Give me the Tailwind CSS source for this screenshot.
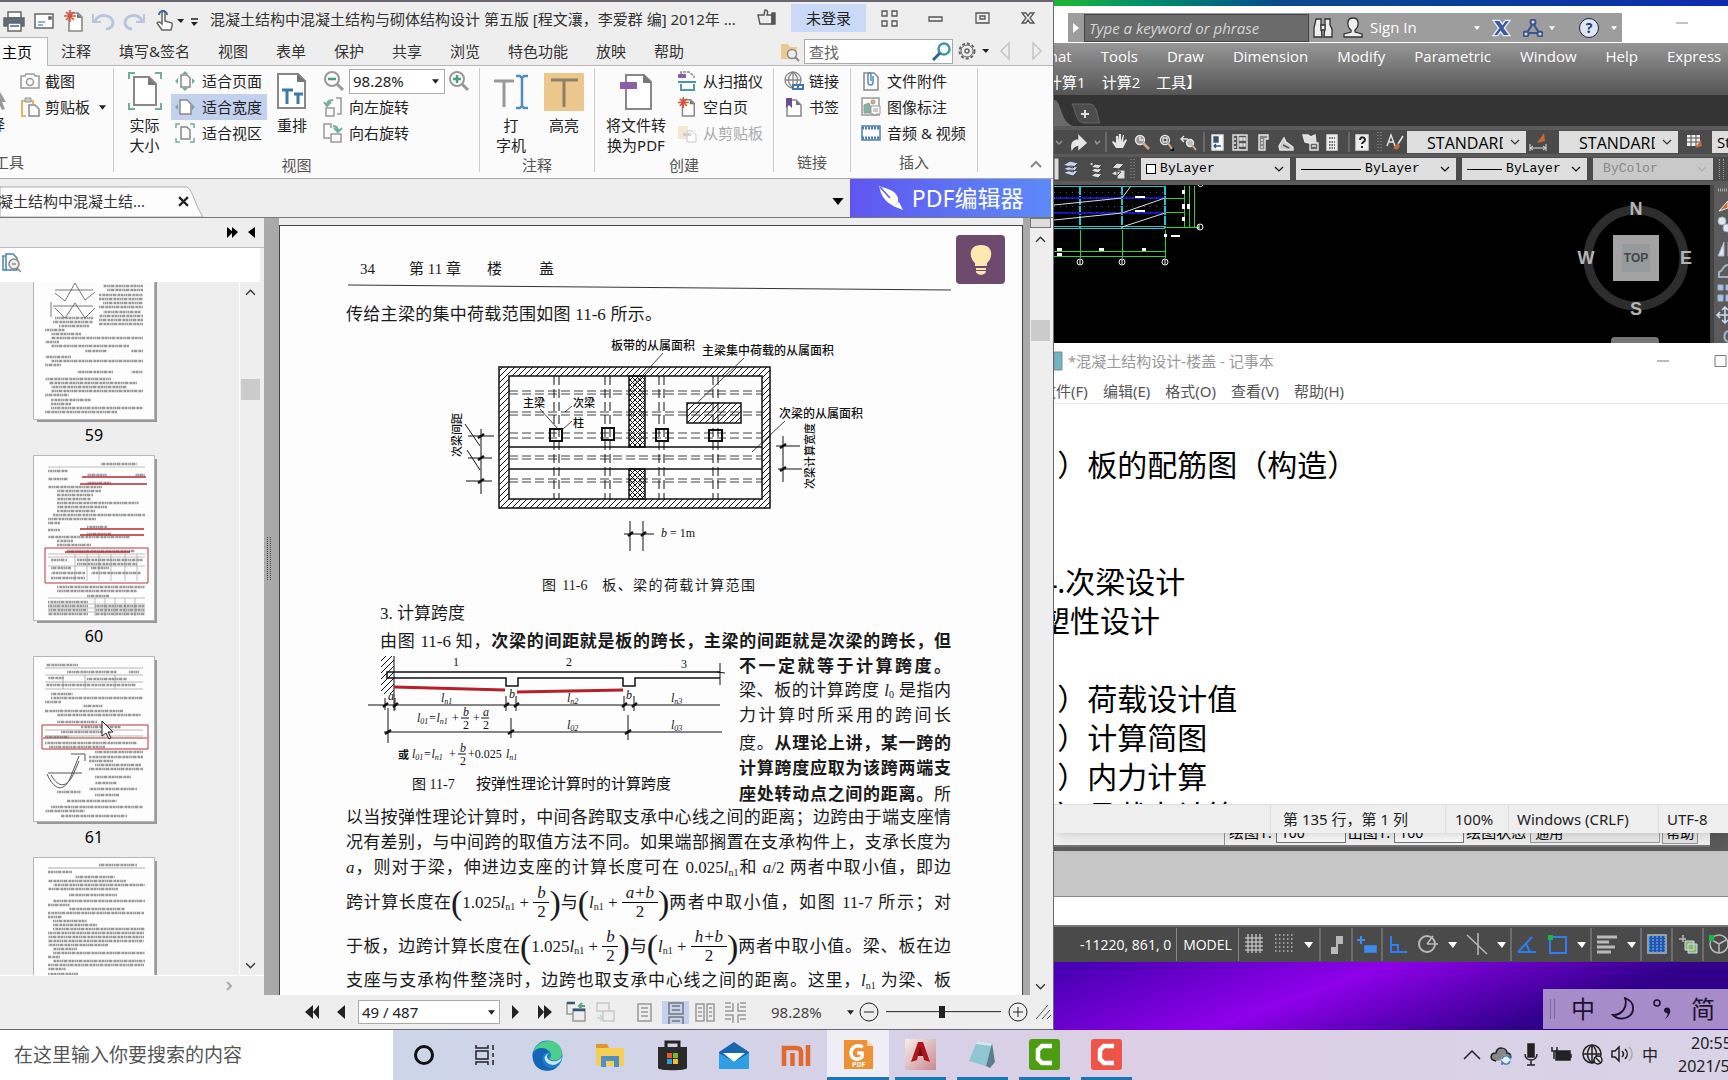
<!DOCTYPE html>
<html lang="zh-CN">
<head>
    <meta charset="UTF-8">
    <meta name="viewport" content="width=device-width, initial-scale=1.0">
    <title>Desktop</title>
    <script src="https://cdn.jsdelivr.net/npm/@tailwindcss/browser@4"></script>
</head>
<body class="h-screen overflow-hidden font-['Noto_Sans','Noto_Sans_CJK_SC',sans-serif] text-[15px] text-[#222]">
<!-- Shared icon shapes -->
<svg class="absolute size-0">
    <symbol id="drop" viewBox="0 0 8 5"><path d="M0 0h8L4 5z" fill="currentColor"/></symbol>
    <symbol id="chev" viewBox="0 0 10 6"><path d="M1 1l4 4 4-4" fill="none" stroke="currentColor" stroke-width="1.2"/></symbol>
    <symbol id="newpage" viewBox="0 0 20 22"><path d="M5 3h9l4 4v14H5z" fill="#fff" stroke="#888" stroke-width="1.6"/><path d="M13 3l5 5h-5z" fill="#777"/><path d="M6 0v12M0 6h12M2 2l8 8M10 2l-8 8" stroke="#d9523c" stroke-width="1.6"/></symbol>
    <pattern id="hatch" width="6" height="6" patternUnits="userSpaceOnUse"><path d="M0 6L6 0M-1 1l2-2M5 7l2-2" stroke="#111" stroke-width="1"/></pattern>
    <pattern id="cross" width="5" height="5" patternUnits="userSpaceOnUse"><path d="M0 5L5 0M0 0l5 5" stroke="#111" stroke-width="1"/></pattern>
</svg>

<div class="relative flex h-full flex-col">
    <!-- Desktop -->
    <main class="relative min-h-0 flex-1 overflow-hidden bg-[#3a0090]">
        <div class="absolute inset-x-0 top-0 h-[6px] bg-linear-to-r from-[#1db13a] from-62% via-[#0d4a8c] via-74% to-[#1028b0]"></div>
        <div class="absolute right-0 bottom-0 left-[61%] h-[70px] bg-linear-[160deg] from-[#4a00b4] from-5% via-[#8e00ea] via-40% to-[#30008a] to-75%"></div>

        <!-- CAD window -->
        <section class="absolute top-[6px] right-0 bottom-[68px] left-[61%] flex flex-col overflow-hidden bg-[#5b5b5b] text-white">
            <header class="flex h-[37px] shrink-0 items-end bg-white pb-px pl-[14px]">
                <div class="flex h-[29px] w-[554px] items-center bg-[#9d9d9d] text-[16px]">
                    <svg class="mx-[5px] h-[10px] w-[6px]" viewBox="0 0 6 10"><path d="M0 0l6 5-6 5z" fill="#fff"/></svg>
                    <input aria-label="Search" placeholder="Type a keyword or phrase" class="h-[28px] w-[225px] border border-[#444] bg-[#6b6b6b] pl-1 font-['Open_Sans'] text-[15px] italic placeholder:text-[#d5d5d5]">
                    <svg class="ml-1 h-[22px] w-5" viewBox="0 0 20 22" fill="#eee" stroke="#333" stroke-width="1.3"><path d="M3 2h5v6l1 12H1V11zM12 2h5l0 6 2 4v8h-8l1-12z"/><path d="M8 8h4v5H8z"/></svg>
                    <svg class="ml-[10px] h-[22px] w-5" viewBox="0 0 20 22" fill="#eee" stroke="#333" stroke-width="1.3"><path d="M10 1c7 0 6 9 2 12v2l7 2v3H1v-3l7-2v-2C4 10 3 1 10 1z"/></svg>
                    <button class="ml-[7px] w-[104px] text-left font-['Open_Sans'] text-[15px]">Sign In</button>
                    <svg class="h-[4px] w-[6px]"><use href="#drop"/></svg>
                    <svg class="ml-3 h-[18px] w-[19px]" viewBox="0 0 20 18"><path d="M1 1h7l3 4 3-4h5l-6 8 6 8h-7l-3-4-3 4H1l6-8z" fill="#3a5c9f" stroke="#e6e9f2" stroke-width="1.500"/></svg>
                    <svg class="ml-3 h-[18px] w-5" viewBox="0 0 20 18" fill="none" stroke="#3b558b" stroke-width="2"><path d="M10 4l6 10H4z"/><circle cx="10" cy="3" r="2.500" fill="#dde"/><circle cx="3" cy="15" r="2.500" fill="#dde"/><circle cx="17" cy="15" r="2.500" fill="#dde"/></svg>
                    <svg class="ml-[6px] h-[4px] w-[6px]"><use href="#drop"/></svg>
                    <button class="ml-6 size-5 rounded-full border border-[#224] bg-[#dfe5f2] text-[14px] leading-4 font-bold text-[#23407a]">?</button>
                    <svg class="ml-3 h-[4px] w-[6px]"><use href="#drop"/></svg>
                </div>
                <svg class="mb-3 ml-[54px] h-[8px] w-3" viewBox="0 0 12 8"><path d="M0 1h12" stroke="#888"/></svg>
            </header>
            <div class="h-[52px] shrink-0 overflow-hidden bg-linear-to-b from-[#979797] to-[#555] font-['Open_Sans','Noto_Sans_CJK_SC'] text-[15px] whitespace-nowrap">
                <nav class="-ml-[10px] flex h-[27px] items-center gap-[29px]">
                    <span>mat</span><span>Tools</span><span>Draw</span><span>Dimension</span><span>Modify</span><span>Parametric</span><span>Window</span><span>Help</span><span>Express</span>
                </nav>
                <nav class="-ml-[7px] flex h-[24px] items-center gap-[16px]"><span>计算1</span><span>计算2</span><span>工具】</span></nav>
            </div>
            <div class="flex h-[31px] shrink-0 items-end bg-[#343434]">
                <svg class="h-[26px] w-[48px]" viewBox="0 0 48 26"><path d="M0 0c8 0 6 24 20 26H0z" fill="#6a6a6a"/><path d="M18 4h18c8 0 8 19 10 19H30c-8 0-8-12-12-19z" fill="#4c4c4c" stroke="#666"/><path d="M31 10v8M27 14h8" stroke="#ddd" stroke-width="2"/></svg>
            </div>
            <!-- Tool row -->
            <div class="mt-1 flex h-[24px] shrink-0 items-center bg-[#4b4b4b]">
                <svg class="h-6 w-[353px] shrink-0" viewBox="1055 130 353 24" fill="none" stroke="#e6e6e6" stroke-width="1.4">
                    <path d="M1057 141l3 3 3-3M1096 141l2 3 3-3" stroke="#999"/>
                    <path d="M1073 149c-1-7 2-9 7-9v-4l7 7-7 6v-4c-3 0-5 1-7 4z" fill="#e6e6e6"/>
                    <path d="M1107 132v20M1205 132v20M1350 132v20" stroke="#777"/>
                    <path d="M1117 148l-4-6 1-1 3 2v-7h2v5l1-7h2v7l2-6h1l-1 7 3-3 1 1-4 8z" fill="#e6e6e6" stroke="none"/>
                    <circle cx="1141" cy="140" r="4.500" fill="#999"/><path d="M1144 143l6 6" stroke="#d7a98a" stroke-width="2.500"/><path d="M1141 137v3h3"/>
                    <circle cx="1166" cy="140" r="4.500"/><path d="M1164 138h4v4h-4z"/><path d="M1169 143l4 6" stroke="#d7a98a" stroke-width="2"/><path d="M1171 151h4v-4z" fill="#111" stroke="none"/>
                    <path d="M1189 139h-6m2-3l-3 3 3 3"/><circle cx="1191" cy="143" r="3.500" fill="#bbb"/><path d="M1193 145l4 5" stroke="#d7a98a" stroke-width="2"/>
                    <path d="M1213 135h11v15h-11z" fill="#fff"/><path d="M1215 137h4v5h-4z" fill="#357" stroke="#357"/><path d="M1215 146h7M1217 144l-2 2 2 2" stroke="#357"/>
                    <path d="M1234 135h14v15h-14z" fill="#555"/><path d="M1239 135v15M1235 139h2M1235 143h2M1235 147h2M1241 138h2v2h-2zM1245 138h1v2h-1zM1241 144h2v2h-2zM1245 144h1v2h-1z"/>
                    <path d="M1260 135h9v4h-3v11h-6z" fill="#888"/><path d="M1262 140h2M1262 143h2M1262 147h2"/>
                    <path d="M1280 146l5-8 2 4 7 5v3h-13z" fill="#ccc"/><path d="M1284 145l6 3" stroke="#555"/>
                    <path d="M1304 135h5l3 2 4-2 1 8h-7l-4-1z" fill="#ddd"/><path d="M1311 143h8v7h-8zM1313 146h4" fill="#666"/>
                    <path d="M1328 135h10v15h-10z" fill="#eee"/><path d="M1330 138h6M1330 142h6M1330 145h6M1330 148h6" stroke="#444" stroke-dasharray="1.500 1"/>
                    <path d="M1357 135h12v15h-12z" fill="#eee"/><path d="M1361 140c0-4 5-3 5 0 0 2-3 2-3 4M1363 146v2" stroke="#222" stroke-width="2"/>
                    <path d="M1379 132v20M1382 132v20" stroke="#888" stroke-dasharray="1 2"/>
                    <path d="M1388 146l4-11 4 11M1390 142h5"/><path d="M1404 136l-5 8" stroke-width="1.500"/><path d="M1394 148l5-5 2 3-3 4z" fill="#c8693a" stroke="none"/>
                </svg>
                <select aria-label="Text style" class="h-[22px] w-[119px] shrink-0 appearance-none bg-[#dedede] pr-[23px] pl-5 font-['Open_Sans'] text-[16px] text-black"><option>STANDARD</option></select>
                <svg class="-ml-4 h-[6px] w-[10px] shrink-0 text-[#333]"><use href="#chev"/></svg>
                <svg class="mx-[9px] h-[20px] w-[18px] shrink-0" viewBox="0 0 18 20" fill="none" stroke="#ddd"><path d="M1 12v7M17 12v7M1 16h16M4 14l-3 2 3 2M14 14l3 2-3 2"/><path d="M8 11l7-10 1 8z" fill="#c8693a" stroke="none"/></svg>
                <select aria-label="Dimension style" class="ml-[3px] h-[22px] w-[119px] shrink-0 appearance-none bg-[#dedede] pr-[23px] pl-5 font-['Open_Sans'] text-[16px] text-black"><option>STANDARD</option></select>
                <svg class="-ml-4 h-[6px] w-[10px] shrink-0 text-[#333]"><use href="#chev"/></svg>
                <svg class="mx-[8px] ml-[14px] h-[18px] w-[18px] shrink-0" viewBox="0 0 18 18"><path d="M1 2h13v11H1z" fill="#eee"/><path d="M1 5h13M1 9h13M5 2v11M10 2v11" stroke="#555"/><path d="M9 15l6-8 1 6z" fill="#c8693a"/></svg>
                <select aria-label="Table style" class="h-[22px] w-[119px] shrink-0 appearance-none bg-[#dedede] pl-[5px] font-['Open_Sans'] text-[15px] text-black"><option>Standard</option></select>
            </div>
            <!-- Layer properties -->
            <div class="mt-[3px] flex h-[24px] shrink-0 items-center gap-[6px] bg-[#4b4b4b] font-['Liberation_Mono'] text-[13px] text-black">
                <svg class="h-6 w-[81px] shrink-0" viewBox="1055 157 81 24" fill="#ddd" stroke="#444"><path d="M1055 158h5v22h-5z"/><path d="M1064 173l7-3 8 1-5 5zM1064 169l7-3 8 1-5 5zM1064 165l7-4 8 2-5 5z" fill="#bcd4ec"/><path d="M1092 176l4-3 7 1-4 4zM1092 171l4-3 7 1-4 4zM1092 167l4-3 7 1-4 4z"/><path d="M1089 164l5-2v4z"/><path d="M1112 174l4-3 6 1-4 4zM1113 168l5-5 7 1-5 5zM1118 170h8v9h-8z"/><path d="M1132 159v20M1135 159v20" stroke="#999" stroke-dasharray="1 2"/></svg>
                <label class="relative flex h-[22px] w-[149px] shrink-0 items-center bg-[#dedede] pl-[5px]"><i class="mr-1 size-[10px] border border-black bg-white"></i><select aria-label="Color" class="flex-1 appearance-none"><option>ByLayer</option></select><svg class="mr-[6px] h-[6px] w-[10px]"><use href="#chev"/></svg></label>
                <label class="relative flex h-[22px] w-[160px] shrink-0 items-center bg-[#dedede] pl-[5px]"><i class="mr-1 h-px w-[60px] bg-black"></i><select aria-label="Linetype" class="flex-1 appearance-none"><option>ByLayer</option></select><svg class="mr-[6px] h-[6px] w-[10px]"><use href="#chev"/></svg></label>
                <label class="relative flex h-[22px] w-[125px] shrink-0 items-center bg-[#dedede] pl-[5px]"><i class="mr-1 h-px w-[35px] bg-black"></i><select aria-label="Lineweight" class="flex-1 appearance-none"><option>ByLayer</option></select><svg class="mr-[6px] h-[6px] w-[10px]"><use href="#chev"/></svg></label>
                <label class="relative flex h-[22px] w-[120px] shrink-0 items-center bg-[#c9c9c9] pl-[10px] text-[#888]"><select disabled aria-label="Plot style" class="flex-1 appearance-none"><option>ByColor</option></select><svg class="mr-[6px] h-[6px] w-[10px] text-[#aaa]"><use href="#chev"/></svg></label>
                <i class="h-5 w-[5px] shrink-0 border-x border-dotted border-[#999]"></i>
            </div>
            <!-- Model space -->
            <div class="mt-1 flex h-[662px] shrink-0">
                <div class="flex flex-1 flex-col bg-black">
                    <div class="flex flex-1 justify-between">
                        <svg class="h-[90px] w-[160px]" viewBox="1055 185 160 90" fill="none" shape-rendering="crispEdges">
                            <path d="M1055 186.500h111M1055 226.500h111M1055 228.500h111" stroke="#25c5cc"/>
                            <path d="M1081 186v42M1123 186v42M1166 186v42" stroke="#25c5cc" stroke-width="2" stroke-dasharray="9 1"/>
                            <path d="M1055 198h111M1055 213h111" stroke="#1212b8" stroke-width="2"/>
                            <path d="M1055 198.500h111M1055 212.500h111M1055 206.500h111M1055 192.500h111" stroke="#2a55aa" stroke-dasharray="1 5"/>
                            <path d="M1166 198.500h20M1166 212.500h20M1166 227.500h34M1185.500 186v42M1190.500 186v42M1195.500 186v42M1081.500 230v28M1123.500 230v28M1166.500 230v28M1055 251.500h111M1055 256.500h111" stroke="#2fd02f"/>
                            <path d="M1055 205l68-7 9-12M1055 220l68-7 43-15M1123 227l43-14" stroke="#ddd" shape-rendering="auto"/>
                            <path d="M1136 196h10v2h-10zM1136 210h10v2h-10zM1183 190h3v4h-3zM1183 204h3v5h-3zM1188 204h3v5h-3zM1183 217h3v4h-3zM1172 235h9v2h-9zM1165 234h3v3h-3zM1058 248h5v3h-5zM1058 253h5v3h-5zM1100 248h5v3h-5zM1143 248h4v3h-4z" fill="#fff"/>
                            <g stroke="#fff" shape-rendering="auto"><circle cx="1081" cy="262" r="3"/><circle cx="1123" cy="262" r="3"/><circle cx="1166" cy="262" r="3"/><circle cx="1201" cy="227" r="3"/><path d="M1081 260v4M1123 260v4M1166 260v4M1200 225v4M1199 185c1 2 4 2 5 0"/></g>
                        </svg>
                        <svg class="mr-4 h-[158px] w-[130px] font-['Liberation_Sans'] font-bold" viewBox="1564 185 130 158" fill="#b5b5b5" text-anchor="middle" font-size="18">
                            <circle cx="1636" cy="258" r="48" fill="none" stroke="#2d2d2d" stroke-width="9"/>
                            <text x="1636" y="215">N</text><text x="1586" y="264">W</text><text x="1686" y="264">E</text><text x="1636" y="315">S</text>
                            <path d="M1613 235h46v46h-46z" fill="#a3a3a3"/><path d="M1622 244h28v28h-28z" fill="#959a9c"/>
                            <text x="1636" y="262" font-size="12" fill="#444">TOP</text>
                            <rect x="1611" y="337" width="48" height="14" rx="4" fill="#777"/>
                        </svg>
                    </div>
                    <div class="flex h-[28px] items-end border-b-2 border-[#777] bg-[#f5f5f5] pl-[170px] text-[15px] text-black">
                        <div class="flex h-[26px] items-center gap-[2px] border-l border-[#999] pl-1 whitespace-nowrap">
                            <label class="flex items-center gap-1">绘图1:<select class="h-[22px] w-[70px] appearance-none border border-[#777] bg-white pl-1 text-[14px]"><option>100</option></select></label>
                            <label class="flex items-center gap-1">出图1:<select class="h-[22px] w-[70px] appearance-none border border-[#777] bg-white pl-1 text-[14px]"><option>100</option></select></label>
                            <label class="flex items-center gap-1">绘图状态<select class="h-[22px] w-[130px] appearance-none border border-[#999] bg-[#eee] pl-1 text-[14px]"><option>通用</option></select></label>
                            <button class="h-[24px] w-[36px] border border-[#999] bg-[#e8e8e8] text-[14px]">帮助</button>
                        </div>
                    </div>
                </div>
                <svg class="h-[158px] w-[18px]" viewBox="1710 185 18 158" fill="#dfe6ee" stroke="#9fb2c8"><path d="M1710 185h4v158h-4z" fill="#444" stroke="none"/><path d="M1718 190h10" stroke="#aaa" stroke-dasharray="1 1" stroke-width="3"/><path d="M1719 211l9-10v7z" fill="#c8693a" stroke="#eee"/><circle cx="1722" cy="221" r="4"/><circle cx="1727" cy="228" r="4"/><path d="M1724 242v14h-6zM1728 242v14"/><path d="M1728 265c-6 0-4 6-9 7v5h9" fill="none" stroke-width="2"/><path d="M1718 285h5v5h-5zM1726 285h5v5h-5zM1718 295h5v6h-5zM1726 295h5v6h-5z" fill="#9fc3ec"/><path d="M1717 315h12M1725 308v14M1720 312l-3 3 3 3M1722 310l3-3 3 3M1722 320l3 3 3-3" stroke="#cfe0f5" stroke-width="1.500" fill="none"/><path d="M1728 331a6 6 0 0 0 0 11" fill="none" stroke-width="2"/></svg>
            </div>
            <div class="mt-[4px] h-[46px] shrink-0 border-b border-[#888] bg-[#c6c6c6]"></div>
            <div class="h-[28px] shrink-0 bg-white"></div>
            <!-- CAD status bar -->
            <footer class="flex min-h-0 flex-1 items-center border-t-2 border-[#777] bg-[#4a4a4a] py-px pl-6 font-['Open_Sans'] text-[14px] whitespace-nowrap">
                <span class="w-[98px] pl-[2px]">-11220, 861, 0</span>
                <button class="flex h-full w-[63px] items-center justify-center border-x border-[#888]">MODEL</button>
                <svg class="h-[33px] w-[489px] shrink-0" viewBox="1240 926 489 33" fill="none" stroke="#b9b9b9" stroke-width="1.500">
                    <path d="M1321 926v33M1353 926v33M1383 926v33M1512 926v33M1592 926v33M1642 926v33M1673 926v33M1704 926v33" stroke="#7a7a7a"/>
                    <path d="M1249 932v19M1253 932v19M1257 932v19M1261 932v19M1246 936h18M1246 940h18M1246 944h18M1246 948h18"/>
                    <path d="M1276 933h18M1276 937h18M1276 941h18M1276 945h18M1276 949h18" stroke-dasharray="1.500 2.500"/>
                    <path d="M1305 940h9l-4 6zM1449 940h9l-4 6zM1498 940h9l-4 6zM1578 940h9l-4 6zM1628 940h9l-4 6z" fill="#fff" stroke="none"/>
                    <path d="M1338 948v-13h5v6h-5M1333 946h5v5h-5z" stroke-width="2" fill="#b9b9b9"/>
                    <path d="M1362 934v8M1358 938h8" stroke="#3c8cf0" stroke-width="2"/><path d="M1366 944h11v6h-11z" stroke="#3c8cf0" fill="#3c8cf0"/>
                    <path d="M1392 934v16h16M1392 943h7v7" stroke="#2f7df0" stroke-width="2"/>
                    <circle cx="1428" cy="942" r="8" stroke-width="2"/><path d="M1428 942h11M1428 942l6-8"/>
                    <path d="M1468 933l20 19M1479 931v22"/>
                    <path d="M1519 950h18M1519 950l14-15M1527 942l4 8" stroke="#2f7df0" stroke-width="2"/>
                    <path d="M1551 935h16v16h-16z" stroke="#2f7df0" stroke-width="2"/><path d="M1549 933h5v5h-5z" fill="#1b4" stroke="none"/>
                    <path d="M1598 935h20M1598 940h12M1598 945h18M1598 950h14" stroke-width="3"/>
                    <path d="M1649 933h18v18h-18z" fill="#2456a8"/><path d="M1649 935h18M1649 938h18M1649 941h18M1649 944h18M1649 947h18M1649 950h18" stroke="#5a9cf5" stroke-dasharray="2 2"/>
                    <path d="M1684 933v7M1680 937h7"/><path d="M1686 939h9v9h-9zM1689 942h9v9h-9z" fill="#8db86b" stroke="#cde" stroke-width="1"/>
                    <circle cx="1720" cy="942" r="9"/><path d="M1720 942v9M1720 942l-7-4M1720 942l7-4"/><path d="M1710 933h5v6h-5z" fill="#1b4" stroke="none"/>
                </svg>
            </footer>
        </section>

        <!-- Notepad window -->
        <section class="absolute top-[343px] right-0 left-[61%] flex h-[490px] flex-col overflow-hidden bg-white whitespace-nowrap shadow-lg">
            <header class="flex h-[36px] shrink-0 items-center text-[#999]">
                <svg class="h-[20px] w-[10px]" viewBox="0 0 10 20"><path d="M0 1h8v18H0z" fill="#6fb7c4" stroke="#888"/></svg>
                <h2 class="ml-1 flex-1">*混凝土结构设计-楼盖 - 记事本</h2>
                <svg class="h-3 w-3" viewBox="0 0 12 12"><path d="M0 6h12" stroke="#777"/></svg>
                <svg class="ml-[45px] h-3 w-[14px]" viewBox="0 0 14 12"><path d="M1 .5h11v11H1z" fill="none" stroke="#777"/></svg>
            </header>
            <nav class="-ml-[13px] flex h-[25px] shrink-0 items-center gap-[15px] border-b border-[#e8e8e8] text-[#555]">
                <span>文件(F)</span><span>编辑(E)</span><span>格式(O)</span><span>查看(V)</span><span>帮助(H)</span>
            </nav>
            <textarea aria-label="Document" class="mt-[2px] -ml-[14px] min-h-0 flex-1 resize-none overflow-hidden text-[30px] leading-[39px] text-black">

&#8199;）板的配筋图（构造）


4.次梁设计
塑性设计

&#8199;）荷载设计值
&#8199;）计算简图
&#8199;）内力计算
&#8199;）承载力计算</textarea>
            <footer class="flex h-[29px] shrink-0 items-stretch border-t border-[#ddd] bg-[#efefef] leading-[28px]">
                <span class="flex-1"></span>
                <span class="w-[175px] border-l border-[#ddd] pl-3">第 135 行，第 1 列</span>
                <span class="w-[63px] border-l border-[#ddd] pl-[9px]">100%</span>
                <span class="w-[150px] border-l border-[#ddd] pl-2">Windows (CRLF)</span>
                <span class="w-[70px] border-l border-[#ddd] pl-2">UTF-8</span>
            </footer>
        </section>

        <!-- PDF reader window -->
        <section class="absolute inset-y-0 left-0 flex w-[61%] flex-col overflow-hidden border-t-2 border-r border-b border-[#6b6670] bg-[#eee] whitespace-nowrap">
            <header class="flex h-[35px] shrink-0 items-center">
                <svg class="h-7 w-[206px] shrink-0" viewBox="0 6 206 28" fill="none" stroke="#666" stroke-width="1.500">
                    <path d="M8 12h13v6H8z" fill="#fff"/><path d="M4 18h20v8H4z" fill="#5b6f82"/><path d="M8 23h13v8H8z" fill="#fff"/><path d="M10 26h9" stroke="#468"/>
                    <path d="M35 14h18v14H35z" fill="#fff"/><path d="M38 22h7M38 25h5" stroke="#79a"/><path d="M49 17h2v2h-2z" fill="#459"/>
                    <path d="M95 21c4-9 18-6 18 2 0 4-4 6-7 6" stroke="#b7c6dd" stroke-width="3"/><path d="M93 14v8h8" stroke="#b7c6dd" stroke-width="2"/>
                    <path d="M142 21c-4-9-17-6-17 2 0 4 4 6 7 6" stroke="#b7c6dd" stroke-width="3"/><path d="M144 14v8h-8" stroke="#b7c6dd" stroke-width="2"/>
                    <path d="M162 24V13c0-2 3-2 3 0v8l7 2c1 3-1 5-1 7h-9l-5-7c1-2 3-1 5 1z" fill="#fff"/><path d="M159 15a4 4 0 1 1 8 0" stroke="#3f6795" stroke-width="2"/>
                    <path d="M177 19h7l-3 4zM191 22h7l-4 4z" fill="#222" stroke="none"/><path d="M191 19h7" stroke="#222"/>
                    <svg x="64" y="10" width="20" height="22" stroke="none"><use href="#newpage"/></svg>
                </svg>
                <h1 class="ml-1 min-w-0 flex-1 overflow-hidden text-clip text-[15px] text-[#333]">混凝土结构中混凝土结构与砌体结构设计 第五版 [程文瀼，李爱群 编] 2012年 ...</h1>
                <svg class="mb-1 h-5 w-5 shrink-0" viewBox="0 0 20 20" fill="none" stroke="#555" stroke-width="1.400"><path d="M1 7h6l1-5c3 0 3 2 2 5h5v9H3z"/><path d="M15 5h3v11h-3z" fill="#555"/></svg>
                <button class="mx-[14px] mb-[3px] h-[28px] w-[75px] shrink-0 bg-[#cad9f5]">未登录</button>
                <svg class="mb-1 h-5 w-[173px] shrink-0" viewBox="880 6 173 20" fill="none" stroke="#555" stroke-width="1.300"><path d="M882 9h5v5h-5zM892 9h5v5h-5zM882 19h5v5h-5zM892 19h5v5h-5zM929 15h13v4h-13zM976 11h13v10h-13zM980 14h5v3h-5z"/><path d="M1022 11h4l2 3 2-3h4l-4 5 4 5h-4l-2-3-2 3h-4l4-5z"/></svg>
            </header>
            <nav class="flex h-[29px] shrink-0 items-end border-b border-[#b5b5b5] text-[15px] leading-[28px] text-[#333]">
                <a href="#" class="-mb-px h-[29px] w-[48px] border-t border-r border-[#b5b5b5] bg-[#fbfbfb] pl-[2px] text-black">主页</a>
                <div class="flex flex-1 gap-7 pl-[13px]"><a href="#">注释</a><a href="#">填写&amp;签名</a><a href="#">视图</a><a href="#">表单</a><a href="#">保护</a><a href="#">共享</a><a href="#">浏览</a><a href="#">特色功能</a><a href="#">放映</a><a href="#">帮助</a></div>
                <svg class="mb-[3px] h-5 w-[20px]" viewBox="0 0 20 20"><path d="M1 2h7l2 3h7v12H1z" fill="#edc98d"/><circle cx="12" cy="12" r="4.500" fill="#eee" stroke="#888" stroke-width="1.500"/><path d="M15 15l4 4" stroke="#888" stroke-width="2"/></svg>
                <div class="mb-px ml-1 flex h-[25px] w-[149px] items-center border border-[#aaa] bg-white">
                    <input aria-label="查找" placeholder="查找" class="min-w-0 flex-1 pl-1 placeholder:text-[#666]">
                    <svg class="h-5 w-5" viewBox="0 0 20 20" fill="none"><circle cx="12" cy="7" r="5.500" stroke="#3f9aa5" stroke-width="2.500"/><path d="M8 11l-7 7" stroke="#345f9c" stroke-width="3"/></svg>
                </div>
                <svg class="h-[27px] w-[100px]" viewBox="953 38 100 27" fill="none" stroke="#666" stroke-width="1.500"><circle cx="967" cy="51" r="7.500" stroke-dasharray="3 2" stroke-width="2"/><circle cx="967" cy="51" r="6" stroke-width="1"/><circle cx="967" cy="51" r="2"/><path d="M982 49h7l-3 4z" fill="#222" stroke="none"/><path d="M1009 43v16l-8-8zM1033 43v16l8-8z" stroke="#c5c5c5"/></svg>
            </nav>
            <!-- Ribbon -->
            <div class="flex h-[113px] shrink-0 border-b border-[#aaa] bg-[#fbfbfb] pt-[2px] pb-[6px] leading-[20px]">
                <div class="flex w-[114px] flex-col border-r border-[#ccc]">
                    <div class="flex flex-1">
                        <div class="flex w-[20px] flex-col overflow-hidden pt-[24px]"><svg class="h-[22px] w-[8px] shrink-0" viewBox="0 0 8 22"><path d="M0 0l6 10H2l3 7-3 1-2-4z" fill="#999"/></svg><span class="-ml-[10px]">择</span></div>
                        <div class="flex flex-col leading-[26px]">
                            <button class="flex items-center gap-[5px]"><svg class="h-4 w-5" viewBox="0 0 20 16" fill="none" stroke="#999" stroke-width="1.500"><path d="M1 3h4l1-2h8l1 2h4v12H1z"/><circle cx="10" cy="9" r="3.500"/></svg>截图</button>
                            <button class="flex items-center gap-[5px]"><svg class="h-5 w-5" viewBox="0 0 20 20" fill="none" stroke-width="2"><path d="M6 19H2V4h11v3" stroke="#e5b25f"/><path d="M5 1h6v4H5z" fill="#ccc" stroke="#999" stroke-width="1"/><path d="M9 8h6l4 4v7H9z" fill="#fff" stroke="#888" stroke-width="1.500"/></svg>剪贴板<svg class="ml-1 h-[5px] w-[7px]"><use href="#drop"/></svg></button>
                        </div>
                    </div>
                    <p class="-ml-[6px] text-[#555]">工具</p>
                </div>
                <div class="flex w-[366px] flex-col border-r border-[#ccc]">
                    <div class="flex flex-1">
                        <button class="flex w-[57px] flex-col items-center pl-1"><svg class="mt-1 mb-[5px] h-[38px] w-[34px]" viewBox="0 0 34 38" fill="none"><path d="M1 7V1h6M27 1h6v6M1 31v6h6M33 31v6h-6" stroke="#6caf9d" stroke-width="2"/><path d="M6 5h15l7 7v21H6z" stroke="#888" stroke-width="2" fill="#fff"/><path d="M20 5l8 8h-8z" fill="#777"/></svg>实际<br>大小</button>
                        <div class="flex w-[96px] flex-col leading-[26px]">
                            <button class="flex items-center gap-[7px] pl-1"><svg class="h-5 w-5" viewBox="0 0 20 20"><path d="M6 4h6l3 3v9H6z" fill="#fff" stroke="#888" stroke-width="1.500"/><path d="M10 0l3 3H7zM10 20l3-3H7zM0 10l3-3v6zM20 10l-3-3v6z" fill="#6caf9d"/></svg>适合页面</button>
                            <button class="flex items-center gap-[7px] bg-[#c3d0ee] pl-1"><svg class="h-5 w-5" viewBox="0 0 20 20"><path d="M5 3h7l4 4v10H5z" fill="#fff" stroke="#888" stroke-width="1.500"/><path d="M0 10l3-3v6zM20 10l-3-3v6z" fill="#6caf9d"/></svg>适合宽度</button>
                            <button class="flex items-center gap-[7px] pl-1"><svg class="h-5 w-5" viewBox="0 0 20 20" fill="none"><path d="M6 4h6l3 3v9H6z" stroke="#888" stroke-width="1.500"/><path d="M1 5V1h4M15 1h4v4M1 15v4h4M19 15v4h-4" stroke="#6caf9d" stroke-width="1.500"/></svg>适合视区</button>
                        </div>
                        <button class="flex w-[50px] flex-col items-center"><svg class="mt-1 mb-[5px] h-[38px] w-[30px]" viewBox="0 0 30 38"><path d="M1 2h20l7 7v27H1z" fill="#fff" stroke="#888" stroke-width="2"/><path d="M20 1l9 9h-9z" fill="#777"/><path d="M5 18h11M10 18v14M17 22h9M21 22v10" stroke="#3f79a8" stroke-width="3"/></svg>重排</button>
                        <div class="flex flex-col pl-[6px] leading-[26px]">
                            <div class="flex h-[26px] items-center">
                                <svg class="h-5 w-[22px]" viewBox="0 0 22 20" fill="none"><circle cx="9" cy="8" r="7" stroke="#999" stroke-width="2"/><path d="M5 8h8" stroke="#4a9a85" stroke-width="2.500"/><path d="M14 13l6 6" stroke="#999" stroke-width="3"/></svg>
                                <label class="ml-1 flex h-[25px] w-[96px] items-center border border-[#aaa] bg-white pr-[5px] pl-[3px]"><select aria-label="缩放" class="min-w-0 flex-1 appearance-none"><option>98.28%</option></select><svg class="h-[5px] w-[7px]"><use href="#drop"/></svg></label>
                                <svg class="ml-[3px] h-5 w-[22px]" viewBox="0 0 22 20" fill="none"><circle cx="9" cy="8" r="7" stroke="#999" stroke-width="2"/><path d="M5 8h8M9 4v8" stroke="#4a9a85" stroke-width="2.500"/><path d="M14 13l6 6" stroke="#999" stroke-width="3"/></svg>
                            </div>
                            <button class="flex items-center gap-[6px]"><svg class="h-5 w-5" viewBox="0 0 20 20" fill="none"><path d="M3 11h8v8H3zM13 1h5v16h-4" stroke="#999" stroke-width="1.500"/><path d="M10 3c-4 0-6 2-6 5M1 5l3 4 4-4" stroke="#6caf9d" stroke-width="2"/></svg>向左旋转</button>
                            <button class="flex items-center gap-[6px]"><svg class="h-5 w-5" viewBox="0 0 20 20" fill="none"><path d="M7 15H1V1h7v4M8 11h10v8H8z" stroke="#999" stroke-width="1.500"/><path d="M10 3c4 0 5 2 5 5M11 5l4 4 4-4" stroke="#6caf9d" stroke-width="2"/></svg>向右旋转</button>
                        </div>
                    </div>
                    <p class="text-center text-[#555]">视图</p>
                </div>
                <div class="flex w-[115px] flex-col border-r border-[#ccc]">
                    <div class="flex flex-1 pl-[3px]">
                        <button class="flex w-[56px] flex-col items-center"><svg class="mt-[6px] mb-[3px] h-[38px] w-[36px]" viewBox="0 0 36 38" fill="none"><path d="M1 7h20M11 7v26" stroke="#999" stroke-width="3"/><path d="M29 3v30M23 2h4l2 2 2-2h4M23 34h4l2-2 2 2h4" stroke="#4f8fc0" stroke-width="2.500"/></svg>打<br>字机</button>
                        <button class="flex w-[50px] flex-col items-center"><svg class="mt-[5px] mb-1 h-[38px] w-10 bg-[#ebc78c]" viewBox="0 0 40 38"><path d="M7 7h27M20 7v27" stroke="#8d7f6a" stroke-width="3"/></svg>高亮</button>
                    </div>
                    <p class="text-center text-[#555]">注释</p>
                </div>
                <div class="flex w-[179px] flex-col border-r border-[#ccc]">
                    <div class="flex flex-1">
                        <button class="flex w-[82px] flex-col items-center"><svg class="mt-[5px] mb-1 h-[38px] w-[34px]" viewBox="0 0 34 38"><path d="M7 2h18l7 7v27H7z" fill="#fff" stroke="#888" stroke-width="2"/><path d="M24 1l9 9h-9z" fill="#777"/><path d="M1 9h17v7H1z" fill="#8a5fa8"/></svg>将文件转<br>换为PDF</button>
                        <div class="flex flex-col leading-[26px]">
                            <button class="flex items-center gap-[6px]"><svg class="h-5 w-5" viewBox="0 0 20 20" fill="none"><path d="M4 7V1h8l5 4v2" stroke="#888" stroke-dasharray="3 1" stroke-width="1.500"/><path d="M1 3h8v4H1z" fill="#8a5fa8"/><path d="M1 11h18" stroke="#4f8fc0" stroke-width="2"/><path d="M4 13v6h13v-6" stroke="#4f9aa5" stroke-width="2"/></svg>从扫描仪</button>
                            <button class="flex items-center gap-[6px]"><svg class="h-5 w-5"><use href="#newpage"/></svg>空白页</button>
                            <button disabled class="flex items-center gap-[6px] text-[#aaa]"><svg class="h-5 w-5 opacity-50" viewBox="0 0 20 20" fill="none"><path d="M1 3h10v13H1z" fill="#ecd9a8"/><path d="M10 8h5l4 4v7h-9z" fill="#fff" stroke="#999"/><path d="M6 10h8v3H6z" fill="#b9a"/></svg>从剪贴板</button>
                        </div>
                    </div>
                    <p class="text-center text-[#555]">创建</p>
                </div>
                <div class="flex w-[77px] flex-col border-r border-[#ccc]">
                    <div class="flex flex-1 flex-col pl-[10px] leading-[26px]">
                        <button class="flex items-center gap-[5px]"><svg class="h-5 w-5" viewBox="0 0 20 20" fill="none" stroke="#888" stroke-width="1.300"><circle cx="9" cy="9" r="8"/><path d="M1 9h16M9 1v16M9 1c-6 5-6 11 0 16M9 1c6 5 6 11 0 16"/><path d="M9 14h5v4H9zM14 14h5v4h-5z" stroke="#4077a8" stroke-width="2" fill="#fff"/></svg>链接</button>
                        <button class="flex items-center gap-[5px]"><svg class="h-5 w-5" viewBox="0 0 20 20"><path d="M3 3h9l5 5v11H3z" fill="#fff" stroke="#888" stroke-width="1.500"/><path d="M12 3l5 5h-5z" fill="#777"/><path d="M2 1h6v10l-3-3-3 3z" fill="#6f4a92"/></svg>书签</button>
                    </div>
                    <p class="text-center text-[#555]">链接</p>
                </div>
                <div class="flex w-[127px] flex-col border-r border-[#ccc]">
                    <div class="flex flex-1 flex-col pl-[10px] leading-[26px]">
                        <button class="flex items-center gap-[6px]"><svg class="h-5 w-5" viewBox="0 0 20 20" fill="none" stroke="#888" stroke-width="1.500"><path d="M3 2h10l4 4v13H3z"/><path d="M12 5v6c0 4-5 4-5 0V4c0-3 3-3 3 0v6" stroke="#4f8fc0"/></svg>文件附件</button>
                        <button class="flex items-center gap-[6px]"><svg class="h-5 w-5" viewBox="0 0 20 20" fill="none" stroke="#999"><path d="M1 1h17v17H1z" stroke-width="1.500"/><path d="M3 16V8l5-2 4 10z" fill="#7fb5a0"/><circle cx="12" cy="5" r="2" fill="#e5b25f"/><path d="M10 9h9v8h-4l-2 2v-2h-3z" fill="#fff"/><path d="M12 12h5M12 14h5"/></svg>图像标注</button>
                        <button class="flex items-center gap-[6px]"><svg class="h-4 w-5" viewBox="0 0 20 16"><path d="M1 1h18v14H1z" fill="#fff" stroke="#4f7fb0" stroke-width="1.500"/><path d="M1 3h18M1 13h18" stroke="#4f7fb0" stroke-width="3" stroke-dasharray="2 1"/></svg>音频 &amp; 视频</button>
                    </div>
                    <p class="text-center text-[#555]">插入</p>
                </div>
                <div class="flex flex-1 items-end justify-end pr-[11px] pb-1"><svg class="h-[8px] w-3" viewBox="0 0 12 8"><path d="M1 7l5-5 5 5" fill="none" stroke="#888" stroke-width="2"/></svg></div>
            </div>
            <!-- Document tabs -->
            <div class="flex h-[38px] shrink-0 items-end">
                <div class="relative flex h-[31px] w-[204px] items-center">
                    <svg class="absolute inset-0 h-full w-full" viewBox="0 0 204 31"><path d="M0 1h186c6 0 8 16 17 30H0z" fill="#fdfdfd" stroke="#aaa"/></svg>
                    <span class="relative -ml-[2px] w-[180px] text-[#333]">凝土结构中混凝土结...</span>
                    <button aria-label="关闭" class="relative"><svg class="h-[11px] w-[11px]" viewBox="0 0 10 10"><path d="M1 1l8 8M9 1l-8 8" stroke="#222" stroke-width="2"/></svg></button>
                </div>
                <span class="flex-1"></span>
                <svg class="mr-[6px] mb-3 h-[7px] w-3 text-black"><use href="#drop"/></svg>
                <button class="mr-[2px] flex h-[38px] w-[201px] items-center justify-center gap-[8px] bg-linear-to-r from-[#5f55f0] to-[#5b8af8] text-[23px] text-white"><svg class="h-[26px] w-[26px]" viewBox="0 0 26 26"><path d="M1 1l9 3c8 3 11 8 10 13l-4 4c-7-3-11-8-13-13z" fill="#fff"/><path d="M2 2l10 11" stroke="#5f55f0" stroke-width="1.500"/><path d="M15 21l6-4 4 8z" fill="#fff"/></svg>PDF编辑器</button>
            </div>

            <div class="flex min-h-0 flex-1 border-t border-[#777]">
                <!-- Page thumbnails -->
                <aside class="flex w-[264px] shrink-0 flex-col">
                    <div class="flex h-[30px] shrink-0 items-center justify-end gap-[10px] border-b border-[#bbb] pr-[9px]"><svg class="h-[11px] w-[11px]" viewBox="0 0 11 11"><path d="M0 0l6 5-6 6zM5 0l6 5-6 6z"/></svg><svg class="h-[11px] w-[7px]" viewBox="0 0 7 11"><path d="M7 0v11L0 5z"/></svg></div>
                    <div class="mr-1 flex h-[34px] shrink-0 items-center bg-white pl-[2px]"><svg class="mb-1 h-5 w-[19px]" viewBox="0 0 19 20" fill="none" stroke-width="1.500"><path d="M3 3H1v14h8M4 1h7l4 4v12H4z" stroke="#4a80b0"/><circle cx="12" cy="11" r="5" fill="#eee" stroke="#888"/><path d="M10 11h4M15 15l4 4" stroke="#888"/></svg></div>
                    <div class="flex min-h-0 flex-1">
                        <div class="relative flex w-[240px] flex-col items-start overflow-hidden border-r border-white pl-[33px]">
                            <div id="thumbs" class="-mt-[28px] flex w-[124px] flex-col pr-[2px] text-center text-[16px] leading-[27px] text-black"></div>
                            <svg class="absolute top-[438px] left-[101px] h-[20px] w-[13px]" viewBox="0 0 13 20"><path d="M1 1v15l4-3 3 6 2-1-3-6h5z" fill="#fff" stroke="#222"/></svg>
                        </div>
                        <div class="flex flex-1 flex-col items-center pt-[7px] pr-1 pb-[6px]">
                            <svg class="h-[7px] w-[11px] rotate-180 text-[#333]"><use href="#chev"/></svg>
                            <i class="mt-[83px] h-[21px] w-[19px] bg-[#cbcbcb]"></i>
                            <span class="flex-1"></span>
                            <svg class="h-[7px] w-[11px] text-[#333]"><use href="#chev"/></svg>
                        </div>
                    </div>
                    <div class="flex h-[20px] shrink-0 items-center border-t border-white pl-[226px]"><svg class="h-[10px] w-[6px]" viewBox="0 0 6 10"><path d="M1 1l4 4-4 4" fill="none" stroke="#aaa" stroke-width="2"/></svg></div>
                </aside>
                <div class="flex w-[15px] shrink-0 items-center bg-[#a9a9a9] pl-[3px]"><i class="mb-24 h-[43px] w-[4px] border-x border-dotted border-[#444]"></i></div>

                <!-- Book page -->
                <article class="relative mt-[7px] min-w-0 flex-1 overflow-hidden border border-b-0 border-[#444] bg-[#fdfdfd] pl-[66px] font-['Liberation_Serif','Noto_Sans_CJK_SC',serif] text-[17px] text-[#1a1a1a]">
                    <button aria-label="提示" class="absolute top-[9px] right-[17px] flex size-[49px] items-center justify-center rounded bg-[#6e4a6e]"><svg class="h-[32px] w-[22px]" viewBox="0 0 22 32" fill="#fbe9b0"><path d="M11 1c13 0 12 13 6 18v3H5v-3C-1 14-2 1 11 1zM6 24h10v2H6zM6 27h10c0 5-10 5-10 0z"/></svg></button>
                    <div class="w-[605px]">
                        <h3 class="flex h-[58px] pt-[31px] pl-[14px] text-[15px] leading-6"><span class="w-[49px]">34</span><span class="w-[78px]">第 11 章</span><span class="w-[52px]">楼</span><span>盖</span></h3>
                        <svg class="h-[8px] w-full" viewBox="0 0 606 8"><path d="M2 1l604 5" stroke="#333"/></svg>
                        <p class="mt-[10px] w-[316px] leading-[25px] [text-align-last:justify]">传给主梁的集中荷载范围如图 11-6 所示。</p>
                        <svg class="h-[246px] w-full" viewBox="346 327 605 246" fill="none" stroke="#111" font-size="12">
                            <path d="M499 367h271v141H499zM509 376v123h253V376z" fill="url(#hatch)" fill-rule="evenodd" stroke-width="1.500"/>
                            <path d="M509 391h253M509 394h253M509 412h253M509 415h253M509 433h253M509 438h253M509 456h253M509 459h253M509 479h253M509 482h253" stroke-dasharray="9 4" stroke-width="0.800"/>
                            <path d="M554 376v123M559 376v123M605 376v123M610 376v123M659 376v123M664 376v123M713 376v123M718 376v123" stroke-dasharray="9 4"/>
                            <path d="M509 447h253M509 469h253" stroke-width="1.500"/>
                            <path d="M629 376h16v71h-16zM629 469h16v30h-16z" fill="url(#cross)" stroke-width="1.500"/>
                            <path d="M687 403h54v20h-54z" fill="url(#hatch)" stroke-width="1.500"/>
                            <path d="M550 429h12v12h-12zM602 428h12v12h-12zM656 429h12v12h-12zM709 430h13v11h-13z" stroke-width="2"/>
                            <path d="M663 353l-30 33M744 358l-47 45M785 421l-33 31M540 409l18 20M572 406l-7 6M572 421l-10 9" stroke-width="0.800"/>
                            <path d="M481 429v65M468 436h26M468 458h24M466 481h26M465 424l15 22M467 450l13 20M783 436v46M776 446h24M778 469h24M630 521v30M643 521v30M624 534h30"/>
                            <path d="M478 438l6-4M478 460l6-4M478 483l6-4M780 448l6-4M780 471l6-4M628 536l5-4M641 536l5-4" stroke-width="2.500"/>
                            <g fill="#111" stroke="none" font-weight="500"><text x="611" y="350">板带的从属面积</text><text x="702" y="355">主梁集中荷载的从属面积</text><text x="779" y="418">次梁的从属面积</text>
                            <text x="523" y="407" font-size="11">主梁</text><text x="573" y="407" font-size="11">次梁</text><text x="573" y="427" font-size="11">柱</text>
                            <text transform="translate(461 457) rotate(-90)" font-size="11">次梁间距</text><text transform="translate(814 489) rotate(-90)" font-size="11">次梁计算宽度</text>
                            <text x="661" y="537"><tspan font-style="italic">b</tspan> = 1m</text></g>
                        </svg>
                        <p class="ml-[196px] w-[213px] text-[14px] leading-[26px] [text-align-last:justify]">图 11-6 &nbsp; 板、梁的荷载计算范围</p>
                        <p class="mt-[2px] ml-[34px] leading-[26px]">3. 计算跨度</p>
                        <p class="ml-[34px] h-[25px] leading-[25px] [text-align-last:justify]">由图 11-6 知，<b class="font-['Noto_Sans_CJK_SC']">次梁的间距就是板的跨长，主梁的间距就是次梁的跨长，但</b></p>
                        <div class="flex h-[153px] justify-between">
                            <svg class="h-[153px] w-[385px]" viewBox="346 654 385 153" fill="none" stroke="#111" font-size="12">
                                <path d="M381 658h13v38h-13z" fill="url(#hatch)" stroke="none"/>
                                <path d="M394 658v55M720 665v22M717 674l8 1"/>
                                <path d="M720 674H387v6h119v8h12v-8h105v8h12v-8h85" stroke-width="1.500"/>
                                <path d="M394 689l111 3M517 694l106-2" stroke="#b5202a" stroke-width="3"/>
                                <path d="M368 707h352M384 734h338M385 700v12M395 700v12M506 698v15M516 698v15M624 698v15M634 698v15M388 710v35M511 720v20M628 717v25"/>
                                <path d="M383 709l5-4M393 709l5-4M504 709l5-4M514 709l5-4M622 709l5-4M632 709l5-4M385 736l6-4M508 736l6-4M625 736l6-4" stroke-width="2.500"/>
                                <g fill="#111" stroke="none"><text x="453" y="668">1</text><text x="566" y="668">2</text><text x="681" y="670">3</text>
                                <g font-style="italic"><text x="388" y="702">a</text><text x="509" y="700">b</text><text x="626" y="701">b</text>
                                <text x="441" y="704">l<tspan font-size="8" dy="2">n1</tspan></text><text x="567" y="704">l<tspan font-size="8" dy="2">n2</tspan></text><text x="671" y="704">l<tspan font-size="8" dy="2">n3</tspan></text><text x="567" y="731">l<tspan font-size="8" dy="2">02</tspan></text><text x="671" y="731">l<tspan font-size="8" dy="2">03</tspan></text>
                                <text x="417" y="724">l<tspan font-size="8" dy="2">01</tspan><tspan dy="-2">=l</tspan><tspan font-size="8" dy="2">n1</tspan></text><text x="463" y="718">b</text><text x="483" y="718">a</text><text x="460" y="754">b</text>
                                <text x="412" y="760">l<tspan font-size="8" dy="2">01</tspan><tspan dy="-2">=l</tspan><tspan font-size="8" dy="2">n1</tspan></text><text x="506" y="760">l<tspan font-size="8" dy="2">n1</tspan></text></g>
                                <text x="452" y="724">+</text><text x="473" y="724">+</text><text x="463" y="731">2</text><text x="483" y="731">2</text>
                                <text x="398" y="761" font-size="11" font-weight="bold">或</text><text x="449" y="760">+</text><text x="460" y="767">2</text><text x="468" y="760">+0.025</text>
                                <text x="412" y="791" font-size="14">图 11-7</text><text x="476" y="791" font-size="15">按弹性理论计算时的计算跨度</text></g>
                                <path d="M461 720h8M481 720h8M458 756h8"/>
                            </svg>
                            <div class="flex w-[212px] flex-col justify-between leading-[25px] [text-align-last:justify] *:h-[25px]">
                                <p class="font-['Noto_Sans_CJK_SC'] font-bold">不一定就等于计算跨度。</p>
                                <p>梁、板的计算跨度 <i>l</i><sub class="text-[10px] leading-none">0</sub> 是指内</p>
                                <p>力计算时所采用的跨间长</p>
                                <p>度。<b class="font-['Noto_Sans_CJK_SC']">从理论上讲，某一跨的</b></p>
                                <p class="font-['Noto_Sans_CJK_SC'] font-bold">计算跨度应取为该跨两端支</p>
                                <p><b class="font-['Noto_Sans_CJK_SC']">座处转动点之间的距离。</b>所</p>
                            </div>
                        </div>
                        <div class="leading-[25px] [text-align-last:justify]">
                            <p>以当按弹性理论计算时，中间各跨取支承中心线之间的距离；边跨由于端支座情</p>
                            <p>况有差别，与中间跨的取值方法不同。如果端部搁置在支承构件上，支承长度为</p>
                            <p class="h-[25px]"><i>a</i>，则对于梁，伸进边支座的计算长度可在 0.025<i>l</i><sub class="text-[10px] leading-none">n1</sub>和 <i>a</i>/2 两者中取小值，即边</p>
                            <div class="flex h-11 items-center"><span class="w-[105px]">跨计算长度在</span><span class="text-[34px]">(</span><span>1.025<i>l</i><sub class="text-[10px] leading-none">n1</sub> +&nbsp;</span><span class="flex w-4 flex-col text-center leading-[18px] [text-align-last:center]"><i class="border-b border-black">b</i>2</span><span class="text-[34px]">)</span><span>与</span><span class="text-[34px]">(</span><span><i>l</i><sub class="text-[10px] leading-none">n1</sub> +&nbsp;</span><span class="flex w-[36px] flex-col text-center leading-[18px] [text-align-last:center]"><i class="border-b border-black">a+b</i>2</span><span class="text-[34px]">)</span><span class="flex-1">两者中取小值，如图 11-7 所示；对</span></div>
                            <div class="flex h-11 items-center"><span class="w-[174px]">于板，边跨计算长度在</span><span class="text-[34px]">(</span><span>1.025<i>l</i><sub class="text-[10px] leading-none">n1</sub> +&nbsp;</span><span class="flex w-4 flex-col text-center leading-[18px] [text-align-last:center]"><i class="border-b border-black">b</i>2</span><span class="text-[34px]">)</span><span>与</span><span class="text-[34px]">(</span><span><i>l</i><sub class="text-[10px] leading-none">n1</sub> +&nbsp;</span><span class="flex w-[36px] flex-col text-center leading-[18px] [text-align-last:center]"><i class="border-b border-black">h+b</i>2</span><span class="text-[34px]">)</span><span class="flex-1">两者中取小值。梁、板在边</span></div>
                            <p>支座与支承构件整浇时，边跨也取支承中心线之间的距离。这里，<i>l</i><sub class="text-[10px] leading-none">n1</sub> 为梁、板</p>
                        </div>
                    </div>
                </article>
                <div class="w-[7px] shrink-0 bg-[#a9a9a9]"></div>
                <div class="flex w-[23px] shrink-0 flex-col items-center pr-[2px] pb-[5px]">
                    <i class="h-[10px] w-full border border-[#777] bg-[#ddd]"></i>
                    <svg class="mt-2 h-[7px] w-[11px] rotate-180 text-[#333]"><use href="#chev"/></svg>
                    <i class="mt-[77px] h-[21px] w-[19px] bg-[#cbcbcb]"></i>
                    <span class="flex-1"></span>
                    <svg class="h-[7px] w-[11px] text-[#333]"><use href="#chev"/></svg>
                </div>
            </div>
            <!-- Page navigation -->
            <footer class="flex h-[34px] shrink-0 items-center pl-[305px]">
                <svg class="h-[14px] w-[53px]" viewBox="305 0 53 14"><path d="M313 0v14l-8-7zM319 0v14l-6-7zM345 0v14l-8-7z" fill="#222"/></svg>
                <label class="flex h-[24px] w-[142px] items-center border border-[#aaa] bg-white pr-1 pl-[3px]"><select aria-label="页码" class="flex-1 appearance-none"><option>49 / 487</option></select><svg class="h-[5px] w-[7px]"><use href="#drop"/></svg></label>
                <svg class="h-[28px] w-[250px] shrink-0" viewBox="499 998 250 28" fill="none" stroke="#999" stroke-width="1.500">
                    <path d="M511 1005v14l7-7zM537 1005v14l6-7zM543 1005v14l8-7z" fill="#222" stroke="none"/>
                    <path d="M574 1003h-8v11h6M572 1009h12v12h-12z"/><path d="M566 1003h8M572 1010h12" stroke="#357" stroke-width="2.500"/><path d="M584 1006h-6m3-3l-3 3 3 3" stroke="#5aa58f" stroke-width="2"/>
                    <g stroke="#c9c9c9"><path d="M596 1003h12v8h-12zM602 1011h11v10h-11z"/><path d="M596 1018h6m-3-3l3 3-3 3" stroke="#b9d9cd"/></g>
                    <path d="M637 1004h13v17h-13zM640 1008h7M640 1012h7M640 1016h7"/>
                    <path d="M661 1001h27v23h-27z" fill="#c3d0ee" stroke="none"/><path d="M668 1003h14v11h-14zM671 1006h8M671 1010h8M668 1024v-7h14v7M671 1021h8" stroke="#777"/>
                    <path d="M695 1004h8v17h-8zM706 1004h7v17h-7zM697 1008h4M697 1012h4M697 1016h4M708 1008h3M708 1012h3M708 1016h3"/>
                    <path d="M732 1003v8h-8M737 1003v8h8M732 1023v-8h-8M737 1023v-8h8M724 1003h6M739 1003h6M724 1007h6M739 1007h6M724 1019h6M739 1019h6"/>
                </svg>
                <span class="ml-[21px] w-[76px] text-[#444]">98.28%</span>
                <svg class="h-[5px] w-[7px]"><use href="#drop"/></svg>
                <button aria-label="缩小" class="ml-[5px]"><svg class="size-[20px]" viewBox="0 0 20 20" fill="none" stroke="#222"><circle cx="10" cy="10" r="9"/><path d="M5 10h10"/></svg></button>
                <input type="range" aria-label="缩放比例" value="49" class="mx-[7px] h-[14px] w-[115px] appearance-none bg-linear-to-b from-transparent from-45% via-[#222] via-45% to-transparent to-55% [&::-webkit-slider-thumb]:h-[12px] [&::-webkit-slider-thumb]:w-[6px] [&::-webkit-slider-thumb]:appearance-none [&::-webkit-slider-thumb]:bg-[#222]">
                <button aria-label="放大"><svg class="size-[20px]" viewBox="0 0 20 20" fill="none" stroke="#222"><circle cx="10" cy="10" r="9"/><path d="M5 10h10M10 5v10"/></svg></button>
                <svg class="ml-[8px] h-[14px] w-[15px]" viewBox="0 0 15 14" stroke="#555"><path d="M0 14L12 0M6 14l8-9M11 14l4-4"/></svg>
            </footer>
        </section>

        <!-- Input method bar -->
        <div class="absolute right-0 bottom-px flex h-[40px] w-[185px] items-center bg-[#a68cc9] text-[24px] text-[#1c1230]">
            <i class="mr-[16px] ml-[7px] h-5 w-[5px] border-x border-[#7d65a0]"></i>
            <span>中</span>
            <svg class="ml-4 size-[24px]" viewBox="0 0 24 24"><path d="M14 1c3 9-3 17-12 17 7 7 21 3 20-8 0-4-3-7-8-9z" fill="none" stroke="#1c1230" stroke-width="1.800"/></svg>
            <svg class="ml-[17px] h-[24px] w-[22px]" viewBox="0 0 22 24"><circle cx="5" cy="6" r="3" fill="none" stroke="#1c1230" stroke-width="1.500"/><path d="M13 11c6-3 8 6 0 11 3-4 3-5 2-6-3 0-4-3-2-5z" fill="#1c1230"/></svg>
            <span class="ml-[17px]">简</span>
        </div>
    </main>

    <!-- Taskbar -->
    <footer class="flex h-[50px] shrink-0 bg-linear-to-r from-[#cdd5e8] from-25% via-[#dccfe6] via-65% to-[#d8d3e6]">
        <input aria-label="搜索" placeholder="在这里输入你要搜索的内容" class="w-[393px] bg-white pl-[14px] text-[19px] placeholder:text-[#555]">
        <button class="flex w-[62px] items-center justify-center"><svg class="size-[22px]" viewBox="0 0 22 22"><circle cx="11" cy="11" r="8.500" fill="none" stroke="#111" stroke-width="3"/></svg></button>
        <button class="flex w-[60px] items-center justify-center"><svg class="h-[20px] w-[22px]" viewBox="0 0 22 20" fill="none" stroke="#222" stroke-width="1.500"><path d="M2 0v3h12V0M2 6h12v8H2zM2 20v-3h12v3M19 0v5M19 8v4M19 15v5"/></svg></button>
        <button class="flex w-[64px] items-center justify-center"><svg class="size-[31px]" viewBox="0 0 31 31"><circle cx="15.500" cy="15.500" r="15" fill="#1b7fd0"/><path d="M1 13C5-3 30-3 30 14c0 6-8 8-13 5 5-5 0-11-7-10-4 0-8 2-9 4z" fill="#4bcf8a"/><path d="M1 13c3-6 14-7 16 0-5-1-8 4-6 9 2 6 9 8 15 4-7 9-28 6-25-13z" fill="#1464b8"/><path d="M17 13c-3 2-3 7 3 8 4 1 8-1 10-4-1 5-4 7-8 8-9 0-13-9-5-12z" fill="#cfe0f0"/></svg></button>
        <button class="flex w-[62px] items-center justify-center"><svg class="h-[25px] w-[30px]" viewBox="0 0 30 25"><path d="M1 1h11l3 4h14v18H1z" fill="#f7ce55"/><path d="M1 1h11l2 4H1z" fill="#d99b2b"/><path d="M6 24V13h18v11h-5v-6h-8v6z" fill="#4e8fc4"/></svg></button>
        <button class="flex w-[62px] items-center justify-center"><svg class="h-[31px] w-[29px]" viewBox="0 0 29 31"><path d="M8 8V2h13v6" fill="none" stroke="#222" stroke-width="3"/><path d="M0 7h29v21c0 3-29 3-29 0z" fill="#2a2a2a"/><path d="M9 13h5v5H9z" fill="#e9562c"/><path d="M15 13h5v5h-5z" fill="#7cb82f"/><path d="M9 19h5v5H9z" fill="#2c9fe0"/><path d="M15 19h5v5h-5z" fill="#f5bc2d"/></svg></button>
        <button class="flex w-[62px] items-center justify-center"><svg class="h-[29px] w-[32px]" viewBox="0 0 32 29"><path d="M1 11L16 1l15 10v17H1z" fill="#1766ae"/><path d="M5 12h22L16 21z" fill="#fff"/><path d="M1 12l15 9 15-9v16H1z" fill="#2f9fe4"/></svg></button>
        <button class="flex w-[62px] items-center justify-center"><svg class="h-[21px] w-[30px]" viewBox="0 0 30 21" fill="none" stroke="#e2692b" stroke-width="4.500"><path d="M3 21V3h12c4 0 5 2 5 5v13M11.500 21V8M27 0v21"/></svg></button>
        <button class="flex w-[62px] flex-col items-center justify-between bg-white/60"><svg class="mt-[9px] h-[31px] w-[31px]" viewBox="0 0 31 31"><path d="M1 1h23l6 6v23H1z" fill="#ee9034"/><path d="M24 1l6 6h-6z" fill="#ffd9a8"/><path d="M20 8c-6-3-12 0-12 6s7 8 11 4v-4h-5" fill="none" stroke="#fff" stroke-width="3.500"/><text x="9" y="28" font-size="7" font-family="Open Sans" font-weight="bold" fill="#fff">PDF</text></svg><i class="h-[3px] w-full bg-[#1c75bb]"></i></button>
        <button class="flex w-[62px] flex-col items-center justify-between"><svg class="mt-[9px] h-[31px] w-[31px]" viewBox="0 0 31 31"><defs><linearGradient id="acad" x2="1" y2="1"><stop stop-color="#f6eeee"/><stop offset="1" stop-color="#c98a8c"/></linearGradient></defs><path d="M0 0h31v31H0z" fill="url(#acad)"/><path d="M13 3h5l7 20-6-2-1-4h-5l-1 4-6 2z" fill="#b0141c"/><path d="M15 7l3 10h-5z" fill="#7e0d13"/></svg><i class="h-[3px] w-[51px] bg-[#1c75bb]"></i></button>
        <button class="flex w-[62px] flex-col items-center justify-between"><svg class="mt-[9px] h-[31px] w-[30px]" viewBox="0 0 30 31"><path d="M10 2l15 2-6 23-17-5z" fill="#8ec6d2"/><path d="M25 4l3 19-5 6-4-2z" fill="#5a7f8a"/><path d="M10 2l15 2-1 3-15-2z" fill="#d7e6ea"/></svg><i class="h-[3px] w-[51px] bg-[#1c75bb]"></i></button>
        <button class="flex w-[62px] flex-col items-center justify-between"><svg class="mt-[9px] size-[31px]" viewBox="0 0 31 31"><rect width="31" height="31" rx="3" fill="#4c9e11"/><path d="M23 7H13L9 11v9l4 4h10" fill="none" stroke="#fff" stroke-width="4.500"/></svg><i class="h-[3px] w-[51px] bg-[#1c75bb]"></i></button>
        <button class="flex w-[62px] flex-col items-center justify-between"><svg class="mt-[9px] size-[31px]" viewBox="0 0 31 31"><rect width="31" height="31" rx="3" fill="#ee5548"/><path d="M23 7H13L9 11v9l4 4h10" fill="none" stroke="#fff" stroke-width="4.500"/></svg><i class="h-[3px] w-[51px] bg-[#1c75bb]"></i></button>
        <div class="ml-auto flex items-center">
            <svg class="h-[24px] w-[172px]" viewBox="1462 1043 172 24" fill="none" stroke="#222" stroke-width="1.500">
                <path d="M1464 1059l8-8 8 8"/>
                <path d="M1496 1061c-7-1-6-8 0-8 1-7 11-6 11 0 4 0 5 5 2 6" fill="#888"/><circle cx="1506" cy="1060" r="5" fill="#e8f0fa" stroke="none"/><path d="M1502 1059c1-4 6-4 8-1v-3M1510 1061c-1 4-6 4-8 1v3" stroke="#3a7dbd"/>
                <path d="M1528 1044h6v13h-6z" fill="#222"/><path d="M1525 1054c0 8 12 8 12 0M1531 1060v5M1527 1065h8"/>
                <path d="M1556 1051h14v9h-14z" fill="#222"/><path d="M1571 1054v4M1552 1047v4h5v-4M1554 1051v8"/>
                <circle cx="1592" cy="1054" r="9"/><path d="M1583 1054h18M1592 1045v18M1592 1045c-6 5-6 13 0 18M1592 1045c6 5 6 13 0 18"/><circle cx="1598" cy="1060" r="4" fill="#ddd"/><path d="M1595 1057l6 6"/>
                <path d="M1612 1051h3l4-4v14l-4-4h-3zM1622 1051c2 2 2 4 0 6M1625 1049c3 3 3 7 0 10"/><path d="M1629 1047c4 4 4 10 0 14" stroke="#aaa"/>
            </svg>
            <span class="ml-[8px] text-[16px]">中</span>
            <div class="ml-5 w-[50px] overflow-hidden text-[16px] leading-[23px] whitespace-nowrap"><p class="pl-[13px]">20:55</p><p>2021/5</p></div>
        </div>
    </footer>
</div>

<script>
    // Each row: [x, y, length]; the dashes read as tiny lines of print
    const pages = [
        {
            no: 59,
            rows: [[70,32,40],[74,36,36],[66,41,44],[66,45,44],[70,49,40],[66,53,44],[70,58,38],[66,62,44],[66,66,44],[66,70,44],[22,64,38],[20,68,40],[26,72,30],[12,76,20],[18,80,30],[18,84,92],[12,88,14],[18,92,78],[52,97,22],[98,97,12],[12,103,26],[18,107,92],[12,111,16],[44,118,36],[98,118,12],[12,125,66],[16,129,88],[18,133,76],[18,137,92],[12,141,24],[18,146,40],[18,150,20],[18,154,92],[12,158,72]],
            art: '<path d="M22 36h38M22 39l10 8 10-18 10 17 10-8M20 52h40M22 54l10 10 10-15 10 15 10-10M18 48v15" fill="none" stroke="#555" stroke-width=".8"/>'
        },
        {
            no: 60,
            rows: [[68,9,36],[15,16,20],[54,20,20],[102,20,10],[15,24,20],[54,28,24],[15,32,54],[24,36,44],[24,40,36],[24,44,34],[24,48,82],[24,52,50],[24,56,38],[20,60,92],[15,64,48],[15,68,12],[54,72,20],[15,75,12],[54,79,24],[15,82,82],[24,86,16],[24,90,34],[34,96,68],[18,105,16],[44,105,66],[44,109,60],[18,113,20],[58,113,18],[18,118,34],[58,118,50],[18,123,34],[24,132,88],[24,136,80],[54,141,22],[15,147,40],[15,151,40],[15,155,40],[15,159,40],[62,151,50],[62,155,50],[62,159,50]],
            art: '<path d="M15 12h97M15 99h97M15 102h97M42 99v27M54 99v27M66 99v27M78 99v27M92 99v27M104 99v27M15 111h97M15 143h97M15 149h97M15 153h97M15 157h97M62 143v18M72 143v18M82 143v18M92 143v18M102 143v18" stroke="#999" stroke-width=".6"/><path d="M49 22h64M47 29h67M47 74h64M47 80h64M32 97h65" stroke="#bb2a30" stroke-width="1.300"/><path d="M12 93h103v35H12z" fill="none" stroke="#b8353a"/>'
        },
        {
            no: 61,
            rows: [[13,9,32],[34,16,50],[96,16,10],[15,22,16],[54,23,40],[13,29,90],[18,38,22],[18,42,92],[12,46,16],[50,50,20],[12,55,78],[24,59,84],[24,66,40],[48,71,40],[28,76,50],[12,81,24],[12,87,92],[16,91,56],[62,96,48],[56,101,54],[56,105,24],[62,109,46],[56,113,54],[62,121,36],[62,127,22],[56,133,48],[62,139,24],[24,136,24],[34,145,50],[18,151,92],[12,155,40],[28,160,66]],
            art: '<path d="M12 12h98M12 19h98M12 33h98M12 26h98M12 74h98M12 80h98M30 19v14M52 19v14M82 19v14" stroke="#888" stroke-width=".6"/><path d="M9 69h106v24H9z" fill="none" stroke="#b8353a"/><path d="M10 82h104" stroke="#b8353a"/><path d="M14 118c8 18 18 18 24 2l8-20M18 119c8 14 16 12 22 0l6-14M15 117h34M38 98h14v7" fill="none" stroke="#555"/>'
        },
        {
            no: 62,
            rows: [[66,8,38],[15,15,24],[42,20,40],[15,24,78],[20,28,92],[15,32,70],[36,38,48],[20,44,92],[15,48,22],[36,52,56],[15,56,96],[15,60,14],[20,64,34],[20,68,44],[20,72,92],[15,76,96],[15,80,96],[15,84,96],[15,88,60],[20,92,24],[20,96,92],[15,100,12],[20,104,92],[15,108,96],[15,112,18],[15,117,30],[54,121,40]],
            art: '<path d="M15 11h97" stroke="#777" stroke-width=".6"/>'
        }
    ];
    document.getElementById('thumbs').innerHTML = pages.map(p => `
        <svg width="124" height="168" viewBox="0 0 124 168">
            <path d="M4 4h120v164H4z" fill="#999"/>
            <path d="M.5.5h121v165H.5z" fill="#fdfdfd" stroke="#b5b5b5"/>
            ${p.rows.map(r => `<path d="M${r[0]} ${r[1]}h${r[2]}" stroke="#9a9a9a" stroke-width="2.400" stroke-dasharray="2 .5 3 .6 1 .4" stroke-dashoffset="${r[1]}"/>`).join('')}
            ${p.art}
        </svg>
        <span style="height:33px">${p.no}</span>`).join('');
</script>
</body>
</html>
